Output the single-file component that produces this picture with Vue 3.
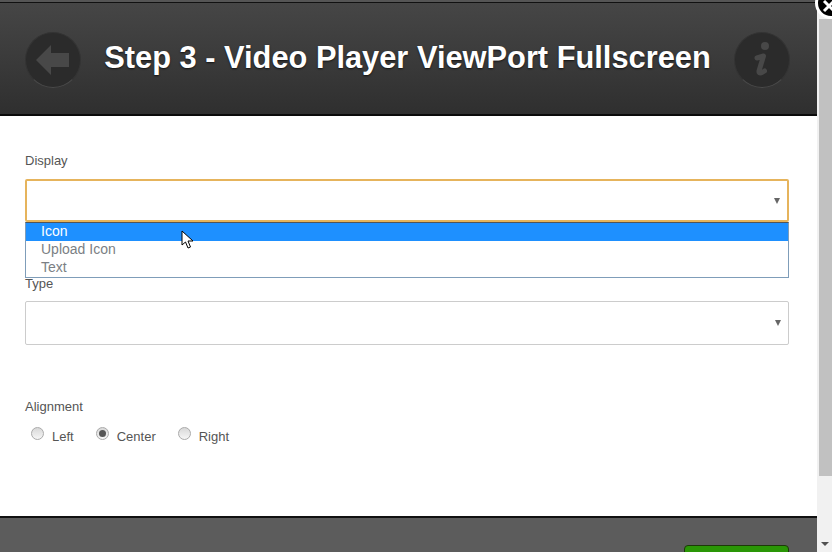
<template>
  <div class="page">
    <div class="modal">
      <!-- header -->
      <div class="head">
        <div class="round-btn">
          <svg width="36" height="32" viewBox="0 0 36 32">
            <path d="M1 16 L16 1 L16 9 L34 9 L34 23 L16 23 L16 31 Z" fill="#484848" />
          </svg>
        </div>
        <h1 class="title">Step 3 - Video Player ViewPort Fullscreen</h1>
        <div class="round-btn">
          <svg width="20" height="38" viewBox="0 0 20 38">
            <circle cx="13" cy="5" r="4" fill="#484848" />
            <path d="M5 17 L11.5 15 L7 30 Q6.5 34 12.5 30" fill="none" stroke="#484848" stroke-width="5" stroke-linecap="round" stroke-linejoin="round" />
          </svg>
        </div>
      </div>

      <!-- form -->
      <div class="body">
        <label class="lbl">Display</label>
        <div class="select-wrap">
          <div class="select focus"><span class="caret"></span></div>
          <ul class="menu">
            <li
              v-for="(opt, index) in displayOptions"
              :key="opt"
              :class="{ active: index === 0 }"
            >{{ opt }}</li>
          </ul>
          <svg class="cursor" width="14" height="20" viewBox="0 0 14 20">
            <path d="M1 1 L1 15 L4.5 12 L7 18 L9.5 17 L7 11 L12 11 Z" fill="#fff" stroke="#000" stroke-width="1" />
          </svg>
        </div>

        <label class="lbl type-lbl">Type</label>
        <div class="select"><span class="caret"></span></div>

        <label class="lbl align-lbl">Alignment</label>
        <div class="radios">
          <label v-for="r in alignments" :key="r" class="radio">
            <span class="dot" :class="{ on: r === 'Center' }"></span>
            <span>{{ r }}</span>
          </label>
        </div>
      </div>

      <!-- footer -->
      <div class="foot">
        <div class="next"></div>
      </div>
    </div>

    <!-- page scrollbar -->
    <div class="scrollbar">
      <div class="thumb"></div>
      <span class="arrow"></span>
    </div>

    <div class="close">
      <svg width="14" height="14" viewBox="0 0 14 14">
        <path d="M2 2 L12 12 M12 2 L2 12" stroke="#fff" stroke-width="3" />
      </svg>
    </div>
  </div>
</template>

<script setup>
const displayOptions = ['Icon', 'Upload Icon', 'Text']
const alignments = ['Left', 'Center', 'Right']
</script>

<style scoped>
.page {
  position: relative;
  display: flex;
  width: 832px;
  height: 552px;
  overflow: hidden;
  background: #fff;
  font-family: "Liberation Sans", Arial, sans-serif;
}

.modal {
  width: 817px;
  height: 552px;
  flex-shrink: 0;
  display: flex;
  flex-direction: column;
}

.head {
  height: 116px;
  flex-shrink: 0;
  box-sizing: border-box;
  display: flex;
  align-items: center;
  justify-content: space-between;
  padding: 4px 27px 0 25px;
  border-top: 2px solid #555;
  border-bottom: 2px solid #0a0a0a;
  box-shadow: inset 0 1px 0 #111;
  background: linear-gradient(#464646, #3c3c3c 45%, #2f2f2f);
}

.round-btn {
  width: 56px;
  height: 56px;
  box-sizing: border-box;
  border-radius: 50%;
  display: flex;
  align-items: center;
  justify-content: center;
  background: #2b2b2b;
  border: 1px solid #343434;
  border-bottom-color: #4a4a4a;
}

.title {
  margin: 0 0 5px;
  font-size: 30.8px;
  font-weight: 700;
  color: #fff;
  text-shadow: 0 1px 2px rgba(0, 0, 0, 0.7);
  white-space: nowrap;
}

.body {
  flex: 1;
  padding: 38px 28px 0 25px;
  background: #fff;
}

.lbl {
  display: block;
  font-size: 13px;
  line-height: 14px;
  color: #555;
}

.select-wrap {
  position: relative;
  margin-top: 11px;
}

.select {
  position: relative;
  height: 44px;
  box-sizing: border-box;
  border: 1px solid #ccc;
  border-radius: 2px;
  background: #fff;
}

.select.focus {
  height: 43px;
  border: 2px solid #e6b45c;
}

.caret {
  position: absolute;
  right: 7px;
  top: 50%;
  margin-top: -3px;
  border-left: 3px solid transparent;
  border-right: 3px solid transparent;
  border-top: 6px solid #666;
}

.menu {
  position: absolute;
  left: 0;
  right: 0;
  top: 43px;
  z-index: 2;
  margin: 0;
  padding: 0;
  list-style: none;
  background: #fff;
  border: 1px solid #7f9db9;
  border-top-color: #555;
  font-size: 14px;
  line-height: 16px;
  color: #7b7f84;
}

.menu li {
  padding: 0 0 2px 15px;
}

.menu li.active {
  background: #1e90ff;
  color: #fff;
}

.cursor {
  position: absolute;
  left: 156px;
  top: 51px;
  z-index: 3;
}

.type-lbl {
  margin-top: 55px;
  margin-bottom: 10px;
}

.align-lbl {
  margin-top: 55px;
}

.radios {
  display: flex;
  gap: 22px;
  margin-top: 15px;
  padding-left: 6px;
}

.radio {
  display: flex;
  align-items: center;
  gap: 8px;
  font-size: 13px;
  line-height: 16px;
  color: #555;
}

.dot {
  width: 13px;
  height: 13px;
  box-sizing: border-box;
  border-radius: 50%;
  border: 1px solid #aaa;
  background: linear-gradient(#d8d8d8, #f6f6f6);
  position: relative;
  top: -4px;
}

.dot.on::after {
  content: '';
  position: absolute;
  left: 2px;
  top: 2px;
  width: 7px;
  height: 7px;
  border-radius: 50%;
  background: #555;
}

.foot {
  height: 36px;
  flex-shrink: 0;
  box-sizing: border-box;
  border-top: 2px solid #111;
  background: #5c5c5c;
  padding: 27px 28px 0 0;
  display: flex;
  justify-content: flex-end;
  overflow: hidden;
}

.next {
  width: 105px;
  height: 20px;
  flex-shrink: 0;
  box-sizing: border-box;
  border: 1px solid #1c3a08;
  border-radius: 4px;
  background: #2a9606;
}

.scrollbar {
  position: relative;
  flex: 1;
  background: #f1f1f1;
}

.thumb {
  margin: 19px 0 0 2px;
  height: 457px;
  background: #c1c1c1;
}

.arrow {
  position: absolute;
  left: 4px;
  bottom: 6px;
  border-left: 4px solid transparent;
  border-right: 4px solid transparent;
  border-top: 4px solid #505050;
}

.close {
  position: absolute;
  top: -13px;
  left: 815px;
  width: 32px;
  height: 32px;
  box-sizing: border-box;
  border-radius: 50%;
  background: #000;
  border: 3px solid #fff;
  display: flex;
  align-items: center;
  justify-content: center;
}

.close svg {
  position: absolute;
  left: 4px;
  top: 9px;
}
</style>
